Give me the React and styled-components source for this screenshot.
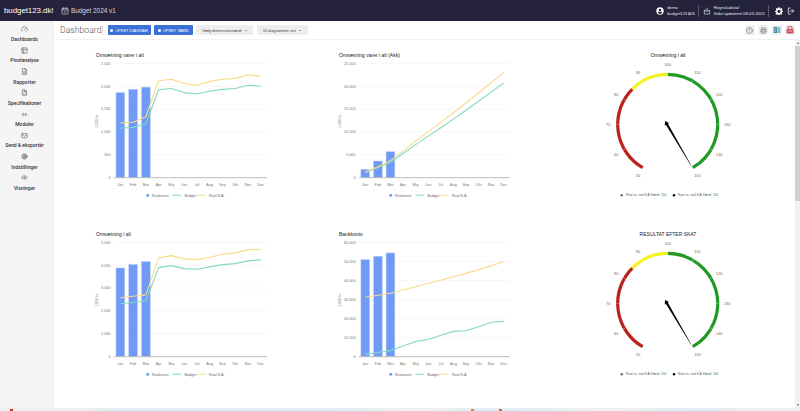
import React from 'react'
import styled, { createGlobalStyle } from 'styled-components'

const GlobalStyle = createGlobalStyle`
  html, body {
    margin: 0;
    padding: 0;
    width: 800px;
    height: 411px;
    overflow: hidden;
    background: #fff;
    font-family: "Liberation Sans", Arial, sans-serif;
  }
`

const MONTHS = ['Jan', 'Feb', 'Mar', 'Apr', 'Maj', 'Jun', 'Jul', 'Aug', 'Sep', 'Okt', 'Nov', 'Dec']

const CHARTS = [
  {
    kind: 'bars',
    title: 'Omsætning varer i alt',
    left: 18,
    max: 2500,
    step: 500,
    bars: [1860, 1930, 1980],
    budget: [1080, 1100, 1180, 1920, 1950, 1860, 1830, 1890, 1930, 1950, 2020, 2000],
    real: [1195, 1210, 1330, 2120, 2150, 2060, 2020, 2100, 2150, 2170, 2250, 2220],
  },
  {
    kind: 'bars',
    title: 'Omsætning varer i alt (Akk)',
    left: 20,
    max: 25000,
    step: 5000,
    bars: [1820, 3650, 5690],
    budget: [1080, 2180, 3360, 5280, 7230, 9090, 10920, 12810, 14740, 16690, 18710, 20710],
    real: [1195, 2405, 3735, 5855, 8005, 10065, 12085, 14185, 16335, 18505, 20755, 22975],
  },
  { kind: 'gauge', title: 'Omsætning i alt' },
  {
    kind: 'bars',
    title: 'Omsætning i alt',
    left: 18,
    max: 5000,
    step: 1000,
    bars: [3880, 4030, 4157],
    budget: [2311, 2369, 2442, 3895, 3983, 3852, 3823, 3924, 4026, 4070, 4186, 4230],
    real: [2573, 2645, 2703, 4317, 4419, 4273, 4244, 4346, 4477, 4535, 4666, 4695],
  },
  {
    kind: 'bars',
    title: 'Bankkonto',
    left: 20,
    max: 60000,
    step: 10000,
    bars: [50930, 52674, 54418],
    budget: [1200, 2200, 3300, 5600, 8000, 9000, 11200, 13250, 13600, 15700, 18100, 18500],
    real: [31200, 32200, 33300, 35000, 36700, 38400, 40100, 41900, 43700, 45600, 47600, 49900],
  },
  { kind: 'gauge', title: 'RESULTAT EFTER SKAT' },
]

const Page = styled.div`
  width: 800px;
  height: 411px;
  display: flex;
  flex-direction: column;
  overflow: hidden;
`

const Header = styled.header`
  height: 21px;
  flex: none;
  display: flex;
  align-items: center;
  background: #25233b;
  color: #fff;
  padding: 0 4px;
`

const Logo = styled.div`
  width: 57px;
  font-size: 8px;
  letter-spacing: -0.1px;
  white-space: nowrap;
`

const BudgetName = styled.div`
  display: flex;
  align-items: center;
  gap: 2px;
  font-size: 6.4px;
  color: #d4d4dc;
  flex: 1;
`

const HeaderBlock = styled.div`
  display: flex;
  align-items: center;
  gap: 3px;
  padding: 0 3.5px;
`

const HeaderText = styled.div`
  font-size: 4.2px;
  line-height: 6px;
  color: #e4e4ea;
  white-space: nowrap;
`

const HeaderDivider = styled.div`
  width: 1px;
  height: 12px;
  background: #5a5970;
`

const HeaderIcons = styled.div`
  display: flex;
  align-items: center;
  gap: 4px;
  padding: 0 1px 0 6px;
`

const Body = styled.div`
  flex: 1;
  min-height: 0;
  display: flex;
`

const Sidebar = styled.nav`
  width: 54px;
  flex: none;
  box-sizing: border-box;
  background: #f5f5f5;
  border-right: 1px solid #eee;
  padding: 4.5px 4px 0 0;
  display: flex;
  flex-direction: column;
`

const NavItem = styled.div`
  height: 21.25px;
  flex: none;
  display: flex;
  flex-direction: column;
  align-items: center;
  justify-content: flex-start;
  gap: 3.5px;
  color: #555;

  svg {
    flex: none;
  }
`

const NavLabel = styled.span`
  font-family: Roboto, "Liberation Sans", sans-serif;
  font-size: 5px;
  line-height: 6px;
  font-weight: 500;
  color: #333;
  white-space: nowrap;
`

const Main = styled.main`
  flex: 1;
  min-width: 0;
  display: flex;
  flex-direction: column;
  background: #fff;
`

const Toolbar = styled.div`
  height: 19px;
  flex: none;
  box-sizing: border-box;
  display: flex;
  align-items: center;
  padding: 0 5px 0 6px;
  border-bottom: 1px solid #f1f1f1;
`

const PageTitle = styled.h1`
  margin: 0;
  width: 43px;
  flex: none;
  box-sizing: border-box;
  height: 10px;
  line-height: 10px;
  font-family: Roboto, "Liberation Sans", sans-serif;
  font-size: 8.7px;
  font-weight: 300;
  color: #555;
  border-right: 1px solid #ddd;
`

const ActionButton = styled.button`
  margin-left: ${p => p.$gap}px;
  width: ${p => p.$width}px;
  height: 10px;
  padding: 0;
  border: 0;
  border-radius: 1px;
  display: flex;
  align-items: center;
  justify-content: center;
  gap: 2px;
  font-family: inherit;
  font-size: 3.9px;
  white-space: nowrap;
  background: ${p => (p.$primary ? '#3b70d6' : '#eeeeee')};
  color: ${p => (p.$primary ? '#fff' : '#444')};
`

const Caret = styled.span`
  width: 0;
  height: 0;
  margin-left: 1.5px;
  border-left: 1.5px solid transparent;
  border-right: 1.5px solid transparent;
  border-top: 1.5px solid #444;
`

const PlusDot = styled.span`
  width: 3px;
  height: 3px;
  border-radius: 50%;
  background: #fff;
`

const ToolIcons = styled.div`
  margin-left: auto;
  display: flex;
  gap: 3.5px;
`

const ToolIcon = styled.div`
  width: 10px;
  height: 10px;
  border-radius: 2px;
  background: #eeeeee;
  display: flex;
  align-items: center;
  justify-content: center;
`

const ContentRow = styled.div`
  flex: 1;
  min-height: 0;
  display: flex;
`

const Content = styled.div`
  flex: 1;
  min-width: 0;
  overflow: hidden;
  padding: 10px 0 0 42px;
  display: grid;
  grid-template-columns: repeat(3, 172px);
  grid-auto-rows: 160px;
  column-gap: 71px;
  row-gap: 19.4px;
`

const Card = styled.section`
  display: flex;
  flex-direction: column;
`

const CardTitle = styled.div`
  height: 10px;
  line-height: 10px;
  font-size: 5px;
  color: #222;
  white-space: nowrap;
  text-align: ${p => (p.$center ? 'center' : 'left')};
`

const ChartSvg = styled.svg`
  display: block;
  width: 172px;
  height: 150px;
  overflow: visible;
  font-family: "Liberation Sans", Arial, sans-serif;
`

const Scrollbar = styled.div`
  width: 5px;
  flex: none;
  background: #f1f1f1;
  display: flex;
  flex-direction: column;
  align-items: center;
`

const ScrollArrow = styled.div`
  margin: 2px 0;
  width: 0;
  height: 0;
  border-left: 1.5px solid transparent;
  border-right: 1.5px solid transparent;
  border-bottom: ${p => (p.$down ? '0' : '2px solid #666')};
  border-top: ${p => (p.$down ? '2px solid #666' : '0')};
`

const ScrollThumb = styled.div`
  width: 100%;
  height: 155px;
  background: #cfcfcf;
`

const ScrollSpace = styled.div`
  flex: 1;
`

const Taskbar = styled.div`
  position: relative;
  height: 3px;
  flex: none;
  box-sizing: border-box;
  border-top: 1px solid #ececec;
  background: linear-gradient(
    90deg,
    #f0f0f0 0,
    #f0f0f0 10%,
    #d6eff9 14%,
    #d5eef9 40%,
    #eaf5fa 52%,
    #d5eef9 62%,
    #e8f5fb 76%,
    #d5eef9 89%,
    #f0f0f0 93%,
    #f0f0f0 100%
  );
`

const TaskMark = styled.span`
  position: absolute;
  top: 0;
  left: ${p => p.$x}px;
  width: 3px;
  height: 2px;
  background: ${p => p.$color};
`

const Icon = ({ size = 7, color = 'currentColor', children }) => (
  <svg width={size} height={size} viewBox="0 0 24 24" fill="none" stroke={color} strokeWidth="2" strokeLinecap="round" strokeLinejoin="round">
    {children}
  </svg>
)

const NAV = [
  ['Dashboards', <><path d="M4 18a10 10 0 1 1 16 0" /><path d="M12 14l3-6" /></>],
  ['Pivotanalyse', <><rect x="3" y="3" width="18" height="18" rx="2" /><path d="M3 9h18M9 9v12" /></>],
  ['Rapporter', <><path d="M6 2h8l5 5v15H6z" /><path d="M14 2v5h5M9 13h7M9 17h7" /></>],
  ['Specifikationer', <><path d="M6 3h7l6 6v12H6z" fill="currentColor" fillOpacity=".15" /><path d="M13 3v6h6" /></>],
  ['Moduler', <><path d="M9 7l-6 5 6 5M15 7l6 5-6 5" /><path d="M9 12h6" /></>],
  ['Send & eksportér', <><rect x="3" y="5" width="18" height="15" rx="2" /><path d="M3 8l9 6 9-6" /></>],
  ['Indstillinger', <><circle cx="12" cy="12" r="9" fill="currentColor" fillOpacity=".3" /><circle cx="12" cy="12" r="3" /></>],
  ['Visninger', <><path d="M2 12s4-6 10-6 10 6 10 6-4 6-10 6-10-6-10-6z" /><circle cx="12" cy="12" r="2" /></>],
]

const BarChart = ({ data }) => {
  const { left, max, step, bars, budget, real } = data
  const right = 171
  const top = 3.3
  const bottom = 117.7
  const band = (right - left) / 12
  const xAt = i => left + band * (i + 0.5)
  const yAt = v => bottom - (v / max) * (bottom - top)
  const ticks = []
  for (let v = 0; v <= max; v += step) ticks.push(v)
  const points = list => list.map((v, i) => `${xAt(i).toFixed(1)},${yAt(v).toFixed(1)}`).join(' ')

  return (
    <ChartSvg viewBox="0 0 172 150">
      {ticks.map(v => (
        <g key={v}>
          {v > 0 && <line x1={left} x2={right} y1={yAt(v)} y2={yAt(v)} stroke="#f2f2f2" strokeWidth="0.7" />}
          <text x={left - 3.5} y={yAt(v) + 1.4} textAnchor="end" fontSize="3.8" fill="#777">
            {v.toLocaleString('da-DK')}
          </text>
        </g>
      ))}
      <text transform="translate(2 61) rotate(-90)" textAnchor="middle" fontSize="3.6" fill="#777">
        1.000 kr.
      </text>
      {bars.map((v, i) => (
        <rect
          key={i}
          x={xAt(i) - 4.4}
          y={yAt(v)}
          width="8.8"
          height={bottom - yAt(v)}
          fill="#6f9bf6"
          stroke="#bcd0fa"
          strokeWidth="0.5"
        />
      ))}
      <line x1={left} x2={right} y1={bottom} y2={bottom} stroke="#b5b5b5" strokeWidth="0.9" />
      <polyline points={points(budget)} fill="none" stroke="#80d9c0" strokeWidth="1.1" strokeLinejoin="round" />
      <polyline points={points(real)} fill="none" stroke="#fdd98a" strokeWidth="1.1" strokeLinejoin="round" />
      {MONTHS.map((m, i) => (
        <text key={m} x={xAt(i)} y="126.4" textAnchor="middle" fontSize="3.8" fill="#777">
          {m}
        </text>
      ))}
      <g fontSize="3.7" fill="#666">
        <circle cx="51.7" cy="135.2" r="1.5" fill="#6f9bf6" />
        <text x="56" y="136.6">Realiseret</text>
        <line x1="76.5" x2="85" y1="135.2" y2="135.2" stroke="#80d9c0" strokeWidth="1" />
        <text x="88.5" y="136.6">Budget</text>
        <line x1="101" x2="109.5" y1="135.2" y2="135.2" stroke="#fdd98a" strokeWidth="1" />
        <text x="113" y="136.6">Real S.Å.</text>
      </g>
    </ChartSvg>
  )
}

const polar = (cx, cy, r, deg) => {
  const a = (deg * Math.PI) / 180
  return [cx + r * Math.sin(a), cy - r * Math.cos(a)]
}

const arcPath = (cx, cy, r, from, to) => {
  const [x1, y1] = polar(cx, cy, r, from)
  const [x2, y2] = polar(cx, cy, r, to)
  const large = to - from > 180 ? 1 : 0
  return `M${x1} ${y1}A${r} ${r} 0 ${large} 1 ${x2} ${y2}`
}

const Gauge = () => {
  const cx = 85.7
  const cy = 64.4
  const angle = v => (v - 100) * 3
  const labels = [50, 60, 70, 80, 90, 100, 110, 120, 130, 140, 150]

  return (
    <ChartSvg viewBox="0 0 172 150">
      <path d={arcPath(cx, cy, 50, angle(50), angle(85))} fill="none" stroke="#b9231b" strokeWidth="3.2" />
      <path d={arcPath(cx, cy, 50, angle(85), angle(100))} fill="none" stroke="#f7f322" strokeWidth="3.2" />
      <path d={arcPath(cx, cy, 50, angle(100), angle(150))} fill="none" stroke="#1f9a22" strokeWidth="3.2" />
      {labels.slice(1, -1).map(v => {
        const [x1, y1] = polar(cx, cy, 48.4, angle(v))
        const [x2, y2] = polar(cx, cy, 51.6, angle(v))
        return <line key={v} x1={x1} y1={y1} x2={x2} y2={y2} stroke="#fff" strokeOpacity=".6" strokeWidth="0.5" />
      })}
      {labels.map(v => {
        const [x, y] = polar(cx, cy, 59.5, angle(v))
        return (
          <text key={v} x={x} y={y + 1.4} textAnchor="middle" fontSize="3.9" fill="#666">
            {v}
          </text>
        )
      })}
      <polygon points="83,61 87,62.9 85.9,63.8 109.2,105.2 108.9,105.4 84,64.9 82.8,65.5" fill="#000" />
      <g fontSize="3.2" fill="#555">
        <circle cx="39.7" cy="135.2" r="1.2" fill="#666" />
        <text x="44" y="136.4">Real vs. real S.Å Værdi: 150</text>
        <circle cx="92" cy="135.2" r="1.2" fill="#000" />
        <text x="96" y="136.4">Real vs. real S.Å Værdi: 150</text>
      </g>
    </ChartSvg>
  )
}

export default function App() {
  return (
    <Page>
      <GlobalStyle />
      <Header>
        <Logo>budget123.dk!</Logo>
        <BudgetName>
          <Icon size={8} color="#d4d4dc">
            <rect x="3" y="4" width="18" height="17" rx="2" />
            <path d="M3 9h18M8 2v4M16 2v4M12 13v5" />
          </Icon>
          Budget 2024 v1
        </BudgetName>
        <HeaderBlock>
          <svg width="8" height="8" viewBox="0 0 24 24" fill="#fff">
            <path d="M12 1a11 11 0 1 0 0 22 11 11 0 0 0 0-22zm0 4a4 4 0 1 1 0 8 4 4 0 0 1 0-8zm0 16a9 9 0 0 1-7-3.4c1-2.2 4-3.1 7-3.1s6 .9 7 3.1A9 9 0 0 1 12 21z" />
          </svg>
          <HeaderText>
            demo
            <br />
            budget123 A/S
          </HeaderText>
        </HeaderBlock>
        <HeaderDivider />
        <HeaderBlock>
          <Icon size={8} color="#e4e4ea">
            <path d="M4 10v11h16V10h-4M8 10H4" />
            <path d="M12 3v11M9 11l3 3 3-3" />
          </Icon>
          <HeaderText>
            Regnskabstal
            <br />
            Sidst opdateret 08-03-2024
          </HeaderText>
        </HeaderBlock>
        <HeaderDivider />
        <HeaderIcons>
          <svg width="8" height="8" viewBox="0 0 24 24" fill="#fff">
            <path d="M10 1h4l.6 3 2.4 1 2.6-1.7 2.8 2.8L20 8.700l1 2.400 3 .6v3l-3 .6-1 2.400 1.700 2.600-2.800 2.800-2.600-1.700-2.400 1-.6 3h-4l-.6-3-2.400-1-2.600 1.700-2.800-2.800L4 17.700l-1-2.400-3-.6v-3l3-.6 1-2.400L2.200 5.700 5 2.900l2.600 1.700 1.800-.6zM12 8a5 5 0 1 0 0 10 5 5 0 0 0 0-10z" fillRule="evenodd" />
          </svg>
          <Icon size={8} color="#fff">
            <path d="M10 3H4v18h6M15 7l5 5-5 5M20 12H9" />
          </Icon>
        </HeaderIcons>
      </Header>
      <Body>
        <Sidebar>
          {NAV.map(([label, glyph]) => (
            <NavItem key={label}>
              <Icon>{glyph}</Icon>
              <NavLabel>{label}</NavLabel>
            </NavItem>
          ))}
        </Sidebar>
        <Main>
          <Toolbar>
            <PageTitle>Dashboard</PageTitle>
            <ActionButton $primary $gap={4.5} $width={43}><PlusDot />OPRET DIAGRAM</ActionButton>
            <ActionButton $primary $gap={3.5} $width={39}><PlusDot />OPRET TABEL</ActionButton>
            <ActionButton $gap={3} $width={57}>Vælg dimensionsværdi<Caret /></ActionButton>
            <ActionButton $gap={3.5} $width={51}>14 diagrammer vist<Caret /></ActionButton>
            <ToolIcons>
              <ToolIcon>
                <Icon size={7} color="#666"><circle cx="12" cy="12" r="10" /><path d="M12 7v6l-2 2" /></Icon>
              </ToolIcon>
              <ToolIcon>
                <Icon size={7} color="#666"><path d="M6 8V3h12v5M6 17H3V9h18v8h-3" /><rect x="7" y="14" width="10" height="7" /></Icon>
              </ToolIcon>
              <ToolIcon>
                <svg width="8" height="8" viewBox="0 0 24 24">
                  <rect x="2" y="3" width="10" height="18" fill="#3d7f9c" />
                  <rect x="13" y="3" width="9" height="18" fill="#7fc3c9" />
                  <path d="M4 8h6M4 12h6M4 16h6" stroke="#fff" strokeWidth="1.5" />
                </svg>
              </ToolIcon>
              <ToolIcon>
                <svg width="8" height="8" viewBox="0 0 24 24">
                  <path d="M6 2h12v8H6z" fill="none" stroke="#c8434d" strokeWidth="2.5" />
                  <rect x="2" y="10" width="20" height="12" fill="#c8434d" />
                  <path d="M6 15h12" stroke="#fff" strokeWidth="2" />
                </svg>
              </ToolIcon>
            </ToolIcons>
          </Toolbar>
          <ContentRow>
            <Content>
              {CHARTS.map(chart => (
                <Card key={chart.title}>
                  <CardTitle $center={chart.kind === 'gauge'}>{chart.title}</CardTitle>
                  {chart.kind === 'gauge' ? <Gauge /> : <BarChart data={chart} />}
                </Card>
              ))}
            </Content>
            <Scrollbar>
              <ScrollArrow />
              <ScrollThumb />
              <ScrollSpace />
              <ScrollArrow $down />
            </Scrollbar>
          </ContentRow>
        </Main>
      </Body>
      <Taskbar>
        <TaskMark $x={10} $color="#d8301f" />
        <TaskMark $x={471} $color="#c98a2b" />
        <TaskMark $x={499} $color="#d0702b" />
      </Taskbar>
    </Page>
  )
}
